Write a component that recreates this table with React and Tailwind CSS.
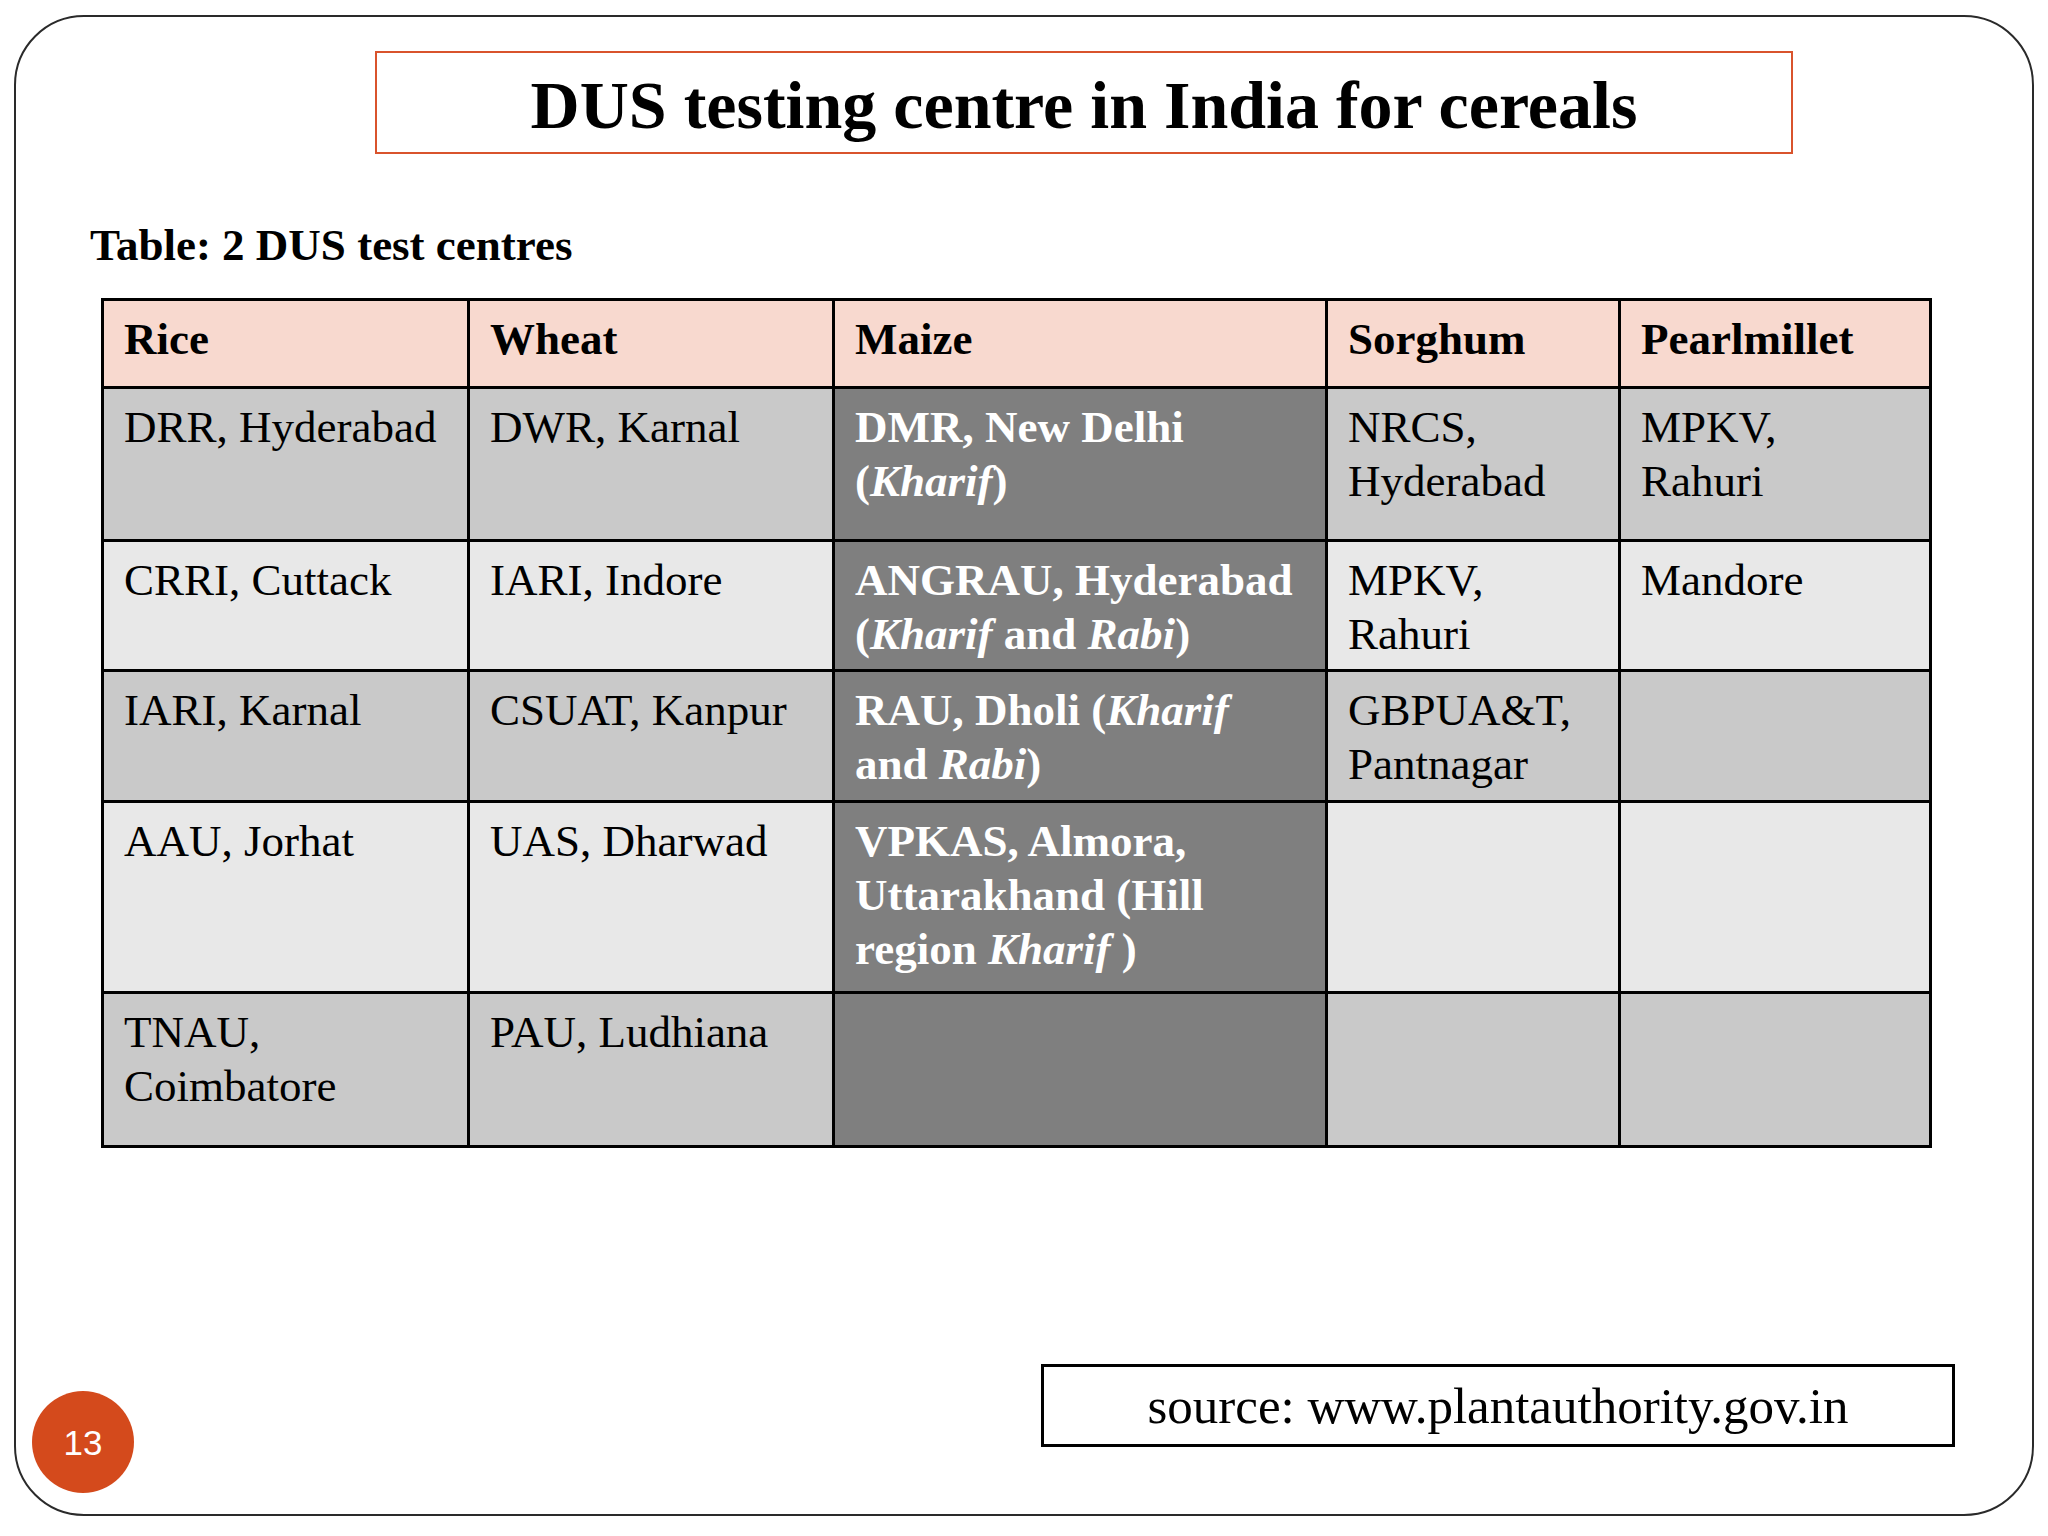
import React from 'react';

const serif = "font-['Liberation_Serif','Times_New_Roman',serif]";

const rowBg = ['bg-[#c9c9c9]', 'bg-[#e8e8e8]', 'bg-[#c9c9c9]', 'bg-[#e8e8e8]', 'bg-[#c9c9c9]'];

// each row: [rice, wheat, maize, sorghum, pearlmillet]
const rows = [
  [
    'DRR, Hyderabad',
    'DWR, Karnal',
    <>DMR, New Delhi<br />(<i>Kharif</i>)</>,
    <>NRCS,<br />Hyderabad</>,
    <>MPKV,<br />Rahuri</>,
  ],
  [
    'CRRI, Cuttack',
    'IARI, Indore',
    <>ANGRAU, Hyderabad<br />(<i>Kharif</i> and <i>Rabi</i>)</>,
    <>MPKV,<br />Rahuri</>,
    'Mandore',
  ],
  [
    'IARI, Karnal',
    'CSUAT, Kanpur',
    <>RAU, Dholi (<i>Kharif</i><br />and <i>Rabi</i>)</>,
    <>GBPUA&amp;T,<br />Pantnagar</>,
    '',
  ],
  [
    'AAU, Jorhat',
    'UAS, Dharwad',
    <>VPKAS, Almora,<br />Uttarakhand (Hill<br />region <i>Kharif</i> )</>,
    '',
    '',
  ],
  [
    <>TNAU,<br />Coimbatore</>,
    'PAU, Ludhiana',
    '',
    '',
    '',
  ],
];

const headers = ['Rice', 'Wheat', 'Maize', 'Sorghum', 'Pearlmillet'];

export default function App() {
  return (
    <div className={`w-[2048px] h-[1536px] bg-white pt-[15px] pl-[14px] ${serif} text-black`}>
      <div className="relative w-[2020px] h-[1501px] rounded-[70px] border-2 border-[#2a2a2a] flex flex-col">
        {/* Title */}
        <div className="ml-[359px] mt-[34px] w-[1418px] h-[103px] border-2 border-[#d9532c] flex items-center justify-center pt-[5px]">
          <h1 className="text-[68px] font-bold leading-none whitespace-nowrap">
            DUS testing centre in India for cereals
          </h1>
        </div>

        {/* Caption */}
        <div className="ml-[74px] mt-[69px] text-[45px] font-bold leading-none">
          Table: 2 DUS test centres
        </div>

        {/* Table */}
        <div className="ml-[85px] mt-[30px] w-[1831px] bg-black p-[3px] grid gap-[3px] grid-cols-[363px_362px_490px_290px_308px] grid-rows-[85px_150px_127px_128px_188px_151px] text-[45px] leading-[54px]">
          {headers.map((h) => (
            <div key={h} className="bg-[#f8d9cf] pl-[20px] pt-[11px] font-bold">
              {h}
            </div>
          ))}
          {rows.map((row, r) =>
            row.map((cell, c) => (
              <div
                key={`${r}-${c}`}
                className={`pl-[20px] pt-[11px] whitespace-nowrap ${
                  c === 2 ? 'bg-[#7f7f7f] text-white font-bold' : rowBg[r]
                }`}
              >
                {cell}
              </div>
            ))
          )}
        </div>

        {/* Source */}
        <div className="ml-[1025px] mt-[216px] w-[914px] h-[83px] border-[3px] border-black flex items-center justify-center pt-[2px]">
          <span className="text-[51px] leading-none whitespace-nowrap">source: www.plantauthority.gov.in</span>
        </div>

        {/* Slide number */}
        <div className="absolute left-[16px] top-[1374px] w-[102px] h-[102px] rounded-full bg-[#d44a1c] flex items-center justify-center">
          <span className="text-white text-[35px] font-['Liberation_Sans',Arial,sans-serif] leading-none">13</span>
        </div>
      </div>
    </div>
  );
}
